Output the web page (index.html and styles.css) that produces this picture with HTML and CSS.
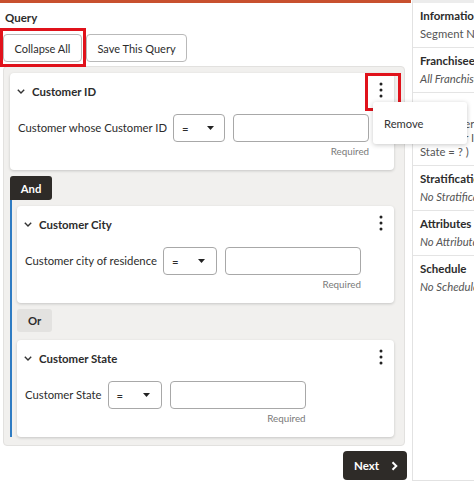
FILE: index.html
```
<!DOCTYPE html>
<html>
<head>
<meta charset="utf-8">
<link rel="stylesheet" href="styles.css">
</head>
<body>
<div class="page">
  <main class="main">
    <div class="topbar"></div>
    <h2 class="heading">Query</h2>
    <div class="toolbar">
      <div class="hl-wrap">
        <button class="btn">Collapse All</button>
        <span class="hl hl-collapse"></span>
      </div>
      <button class="btn">Save This Query</button>
    </div>
    <div class="panel">
      <div class="card card-first">
        <div class="card-head">
          <svg class="chev" width="8" height="5" viewBox="0 0 8 5"><polyline points="0.8,0.8 4,4 7.2,0.8" fill="none" stroke="#333" stroke-width="1.4"/></svg>
          <span class="card-title">Customer ID</span>
          <span class="kebab">
            <svg width="4" height="16" viewBox="0 0 4 16"><circle cx="2" cy="2" r="1.5" fill="#222"/><circle cx="2" cy="8" r="1.5" fill="#222"/><circle cx="2" cy="14" r="1.5" fill="#222"/></svg>
            <span class="hl hl-kebab"></span>
          </span>
        </div>
        <div class="field">
          <span class="label">Customer whose Customer ID</span>
          <div class="select select-narrow"><span>=</span><svg width="7" height="4" viewBox="0 0 7 4"><polygon points="0,0 7,0 3.5,4" fill="#222"/></svg></div>
          <div class="input-col"><div class="input"></div><span class="req">Required</span></div>
        </div>
        <div class="menu"><span class="menu-item">Remove</span></div>
      </div>

      <div class="group">
        <span class="tab tab-and">And</span>
        <div class="group-body">
          <div class="card">
            <div class="card-head">
              <svg class="chev" width="8" height="5" viewBox="0 0 8 5"><polyline points="0.8,0.8 4,4 7.2,0.8" fill="none" stroke="#333" stroke-width="1.4"/></svg>
              <span class="card-title">Customer City</span>
              <span class="kebab">
                <svg width="4" height="16" viewBox="0 0 4 16"><circle cx="2" cy="2" r="1.5" fill="#222"/><circle cx="2" cy="8" r="1.5" fill="#222"/><circle cx="2" cy="14" r="1.5" fill="#222"/></svg>
              </span>
            </div>
            <div class="field">
              <span class="label">Customer city of residence</span>
              <div class="select"><span>=</span><svg width="7" height="4" viewBox="0 0 7 4"><polygon points="0,0 7,0 3.5,4" fill="#222"/></svg></div>
              <div class="input-col"><div class="input"></div><span class="req">Required</span></div>
            </div>
          </div>
          <span class="tab tab-or">Or</span>
          <div class="card card-last">
            <div class="card-head">
              <svg class="chev" width="8" height="5" viewBox="0 0 8 5"><polyline points="0.8,0.8 4,4 7.2,0.8" fill="none" stroke="#333" stroke-width="1.4"/></svg>
              <span class="card-title">Customer State</span>
              <span class="kebab">
                <svg width="4" height="16" viewBox="0 0 4 16"><circle cx="2" cy="2" r="1.5" fill="#222"/><circle cx="2" cy="8" r="1.5" fill="#222"/><circle cx="2" cy="14" r="1.5" fill="#222"/></svg>
              </span>
            </div>
            <div class="field">
              <span class="label">Customer State</span>
              <div class="select"><span>=</span><svg width="7" height="4" viewBox="0 0 7 4"><polygon points="0,0 7,0 3.5,4" fill="#222"/></svg></div>
              <div class="input-col"><div class="input"></div><span class="req">Required</span></div>
            </div>
          </div>
        </div>
      </div>
    </div>
    <div class="footer">
      <button class="btn-next">Next <svg width="7" height="10" viewBox="0 0 7 10"><polyline points="1.5,1.2 5.3,5 1.5,8.8" fill="none" stroke="#fff" stroke-width="2"/></svg></button>
    </div>
  </main>

  <aside class="side">
    <section class="sec">
      <div class="sec-h">Information</div>
      <div class="sec-v">Segment Name</div>
    </section>
    <section class="sec">
      <div class="sec-h">Franchisees</div>
      <div class="sec-v it">All Franchisees</div>
    </section>
    <section class="sec">
      <div class="sec-h">Query</div>
      <div class="sec-v">( Customer whose</div>
      <div class="sec-v">Customer ID = ? AND ( Cu</div>
      <div class="sec-v">State = ? )</div>
    </section>
    <section class="sec">
      <div class="sec-h">Stratification</div>
      <div class="sec-v it">No Stratification</div>
    </section>
    <section class="sec">
      <div class="sec-h">Attributes</div>
      <div class="sec-v it">No Attributes</div>
    </section>
    <section class="sec sec-end">
      <div class="sec-h">Schedule</div>
      <div class="sec-v it">No Schedule</div>
    </section>
  </aside>
</div>
</body>
</html>
```

FILE: styles.css
```
* { box-sizing: border-box; }
html, body { margin: 0; padding: 0; }
body {
  width: 474px;
  height: 491px;
  overflow: hidden;
  background: #fff;
  font-family: "Lato", "Noto Sans", sans-serif;
  font-size: 11.3px;
  color: #2c2c2c;
}
.page {
  display: flex;
  align-items: flex-start;
  width: 700px;
}
.main {
  width: 411px;
  flex: none;
  display: flex;
  flex-direction: column;
}
.topbar {
  height: 3px;
  background: #c8502f;
}
.heading {
  margin: 6px 0 0 5px;
  font-size: 11.5px;
  line-height: 18px;
  font-weight: 700;
}
.toolbar {
  display: flex;
  gap: 4px;
  margin: 7px 0 0 3px;
}
.hl-wrap { position: relative; display: flex; }
.btn {
  height: 28px;
  padding: 0 10.5px;
  border: 1px solid #b9b9b9;
  border-radius: 4px;
  background: #fff;
  font-family: inherit;
  font-size: 11px;
  color: #2c2c2c;
}
.hl {
  position: absolute;
  border: 3px solid #e0121b;
  pointer-events: none;
}
.hl-collapse { left: -3px; top: -6px; right: -4px; bottom: -5px; }

.panel {
  margin: 4px 0 0 3px;
  width: 402px;
  background: #f1f0ee;
  border: 1px solid #e2e1df;
  border-radius: 4px;
  padding: 6px 10px 8px 6px;
}
.card {
  position: relative;
  background: #fff;
  border-radius: 4px;
  box-shadow: 0 1px 3px rgba(0,0,0,0.18);
  padding: 8px 15px 13px 8px;
}
.card-head {
  display: flex;
  align-items: center;
  height: 20px;
}
.chev { margin: 0 7px 0 -1px; }
.card-title {
  font-weight: 700;
  font-size: 11.4px;
}
.kebab {
  position: relative;
  margin: -2px -4px 0 auto;
  display: flex;
}
.hl-kebab { left: -14px; top: -9px; width: 36px; height: 38px; }
.field {
  display: flex;
  align-items: flex-start;
  margin-top: 13px;
}
.label {
  line-height: 28px;
  margin-right: 6px;
  white-space: nowrap;
}
.select {
  width: 54px;
  height: 28px;
  border: 1px solid #a8a8a8;
  border-radius: 4px;
  display: flex;
  align-items: center;
  justify-content: space-between;
  padding: 0 11px 0 8px;
  margin-right: 8px;
  flex: none;
}
.select-narrow { width: 52px; padding-right: 10px; }
.input-col {
  display: flex;
  flex-direction: column;
  align-items: flex-end;
}
.input {
  width: 136px;
  height: 28px;
  border: 1px solid #a8a8a8;
  border-radius: 4px;
}
.req {
  margin-top: 3px;
  font-size: 9.8px;
  line-height: 12px;
  color: #7a7a7a;
}
.menu {
  position: absolute;
  left: 363px;
  top: 29px;
  width: 94px;
  height: 42px;
  background: #fff;
  box-shadow: 0 1px 5px rgba(0,0,0,0.22);
  border-radius: 3px;
  display: flex;
  align-items: center;
  padding-left: 11px;
  z-index: 10;
}
.menu-item { color: #333; font-size: 11.2px; }

.group { margin-top: 6px; display: flex; flex-direction: column; align-items: flex-start; }
.tab {
  display: inline-flex;
  align-items: center;
  justify-content: center;
  font-weight: 700;
  font-size: 11.3px;
}
.tab-and {
  width: 42px;
  height: 24px;
  background: #2e2b28;
  color: #fff;
  border-radius: 3px 3px 3px 0;
}
.group-body {
  align-self: stretch;
  border-left: 2px solid #2f7cc3;
  padding: 6px 0 0 5px;
  display: flex;
  flex-direction: column;
  align-items: flex-start;
}
.group-body .card { align-self: stretch; }
.tab-or {
  margin: 6px 0 8px;
  width: 35px;
  height: 23px;
  background: #e3e2e0;
  color: #2c2c2c;
  border-radius: 3px;
}
.footer {
  display: flex;
  justify-content: flex-end;
  margin: 5px 4px 0 0;
}
.btn-next {
  width: 64px;
  height: 29px;
  background: #2e2b28;
  color: #fff;
  border: none;
  border-radius: 4px;
  font-family: inherit;
  font-weight: 700;
  font-size: 11.5px;
  display: flex;
  align-items: center;
  justify-content: center;
  gap: 12px;
  padding: 0 0 0 2px;
}

.side {
  flex: none;
  width: 220px;
  height: 481px;
  margin-left: 1px;
  border-top: 3px solid #ececec;
  border-left: 1px solid #e2e2e2;
  border-bottom: 1px solid #e2e2e2;
  background: #fff;
}
.sec {
  padding: 4px 7px 6px;
  border-bottom: 1px solid #e4e4e4;
  white-space: nowrap;
}
.sec-end { border-bottom: none; }
.sec-h {
  font-weight: 700;
  line-height: 18px;
  font-size: 11.5px;
  color: #2c2c2c;
}
.sec-v {
  margin-top: 2px;
  line-height: 14px;
  color: #555;
}
.sec-v + .sec-v { margin-top: 0; }
.it { font-style: italic; }
```
